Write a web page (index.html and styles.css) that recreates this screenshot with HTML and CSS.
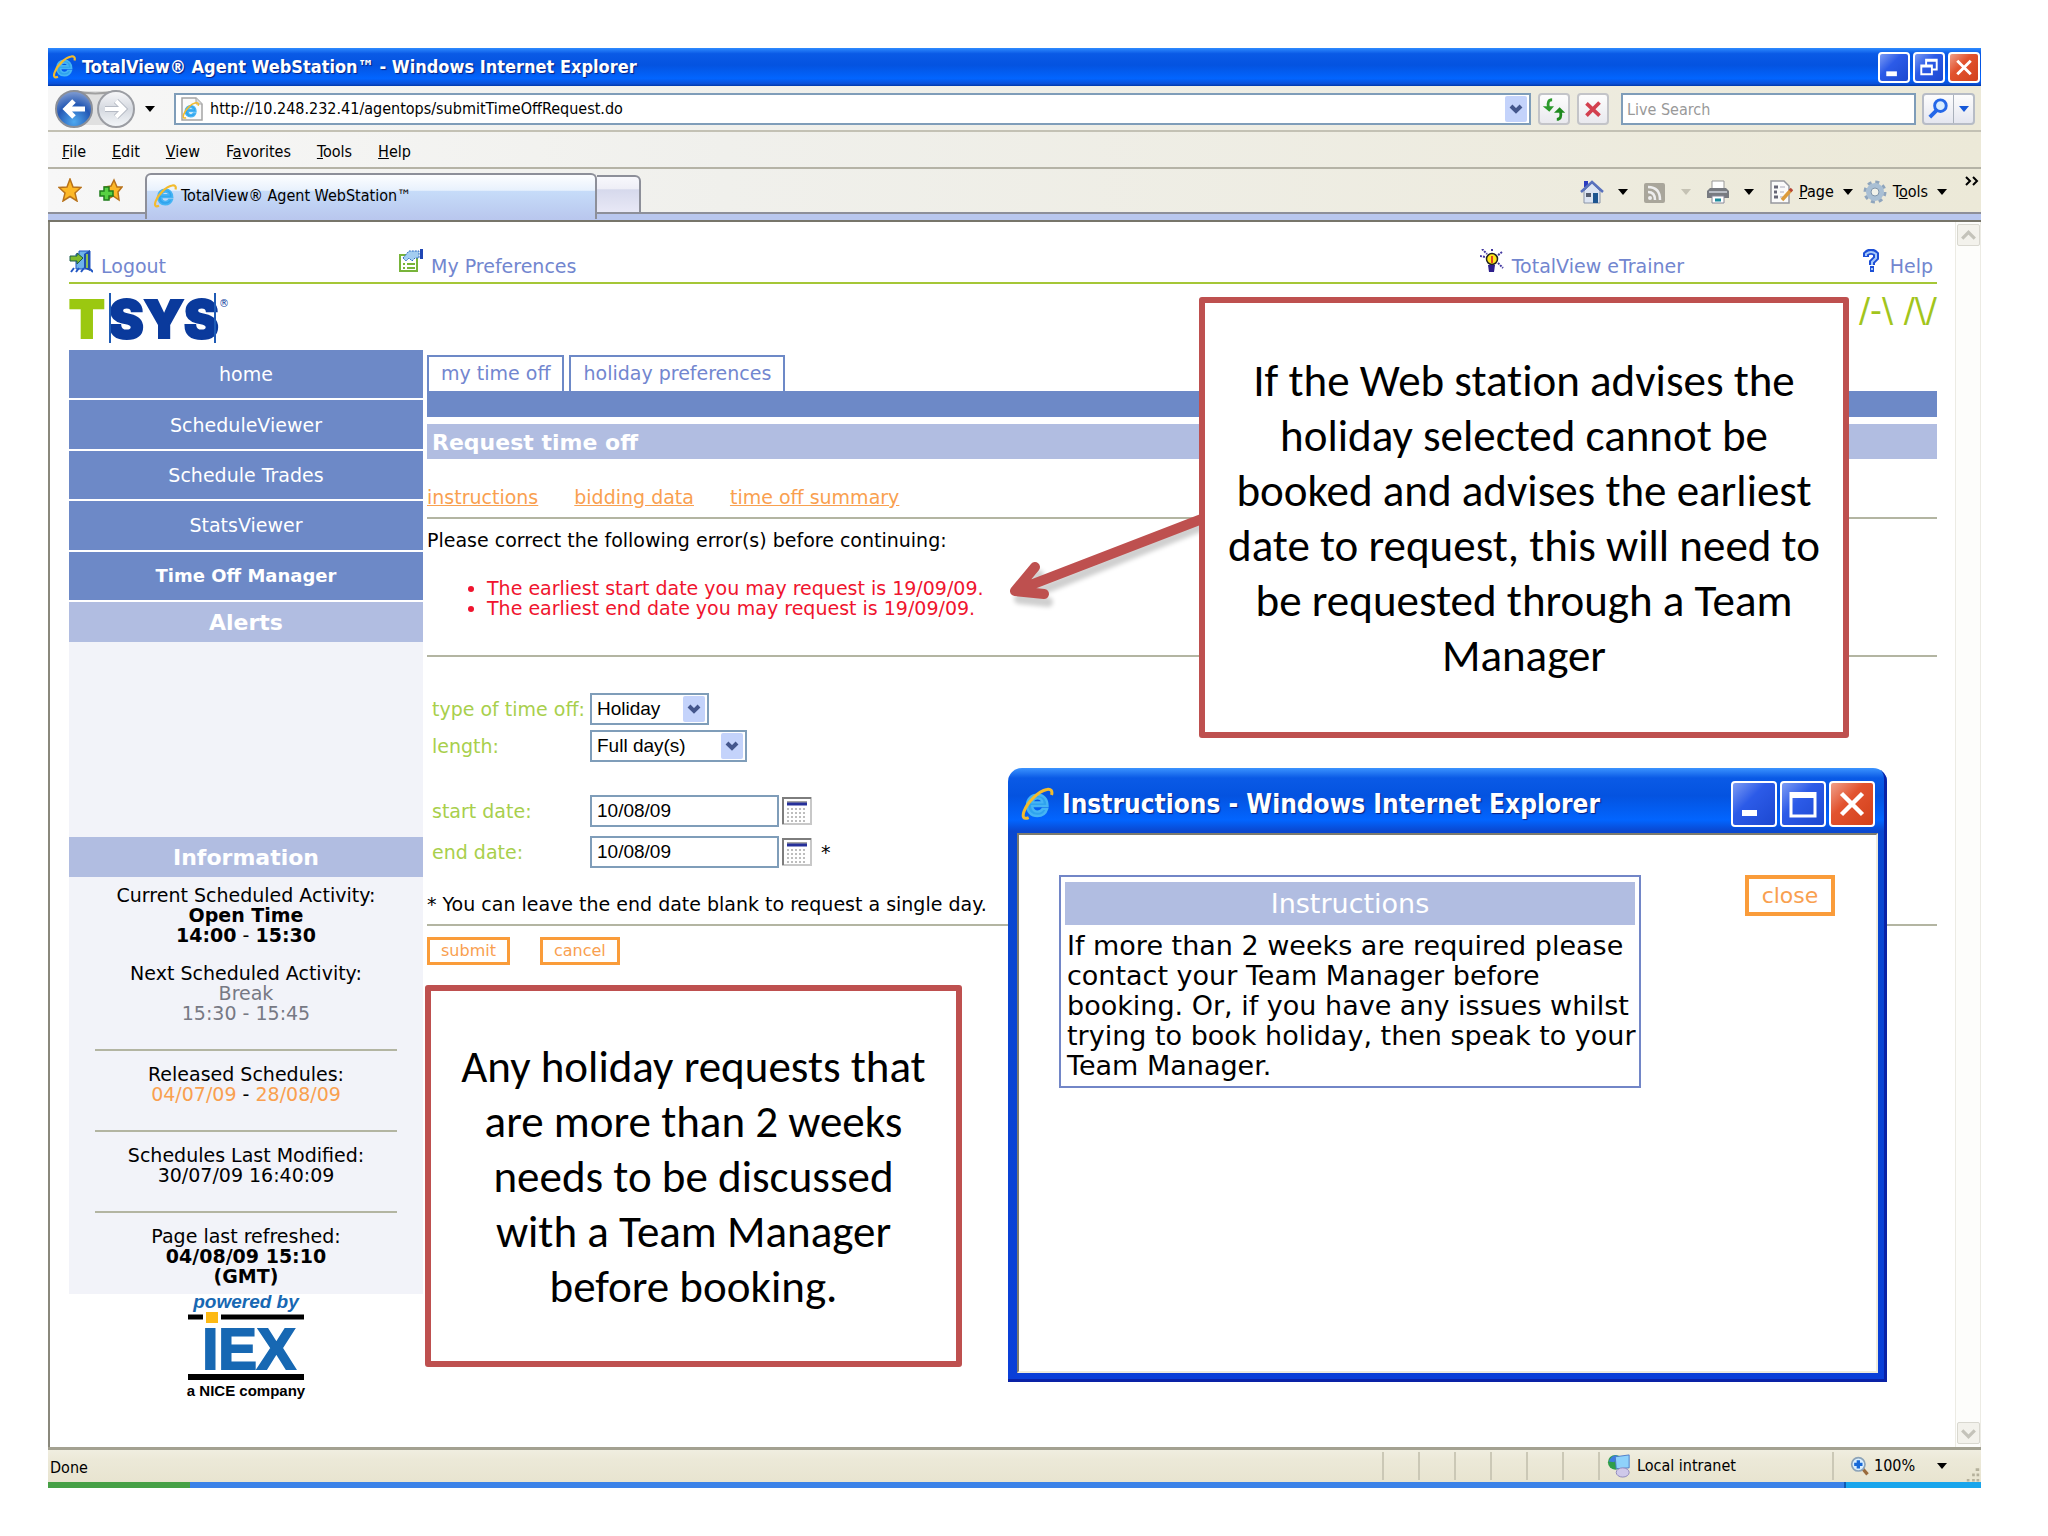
FILE: index.html
```html
<!DOCTYPE html>
<html lang="en">
<head>
  <meta charset="UTF-8">
  <meta name="viewport" content="width=device-width, initial-scale=1">
  <title>TotalView Agent WebStation</title>
  <link rel="stylesheet" href="styles.css">
</head>
<body>
  <!-- Shared icons -->
  <svg class="defs" aria-hidden="true">
    <defs>
      <symbol id="ie" viewBox="0 0 24 26">
        <path d="M19.5 14.5H8.500c.3 2.600 2 4 4 4 1.700 0 2.800-.7 3.500-2h3.300c-1 3.300-3.500 5.200-7 5.200-4.500 0-7.500-3-7.500-7.700S8 6.300 12.400 6.300c4.400 0 7.200 3 7.200 8.200zM8.700 11.800h7.200c-.3-1.800-1.600-2.900-3.500-2.900s-3.300 1.100-3.700 2.900z" fill="#2fa3ee" stroke="#45b4f4" stroke-width="1.700"/>
        <path d="M22.500 6.500c.9-3-.6-4.700-3.400-4C13 3.800 5 11.500 2.600 18.500c-1.300 3.700-.4 5.900 3.400 4.300" fill="none" stroke="#f2bb2e" stroke-width="2.200"/>
      </symbol>
      <symbol id="calendar" viewBox="0 0 30 28">
        <rect x="1" y="1" width="28" height="26" fill="#fff" stroke="#c8c8c8" stroke-width="2"/>
        <path d="M1 27V1h28" fill="none" stroke="#7d7d7d" stroke-width="2"/>
        <path d="M5 5h20" stroke="#a5a5a5" stroke-width="2"/>
        <path d="M5 7h20" stroke="#26309a" stroke-width="3"/>
        <path d="M5 12h20M5 16h20M5 20h20M5 24h20" stroke="#bdbdbd" stroke-width="2" stroke-dasharray="2 2"/>
      </symbol>
      <symbol id="drop" viewBox="0 0 10 6"><path d="M0 0h10L5 6z" fill="currentColor"/></symbol>
    </defs>
  </svg>

  <div class="window">
    <header class="titlebar">
      <svg class="icon-ie"><use href="#ie"/></svg>
      <span class="titlebar-text">TotalView® Agent WebStation™ - Windows Internet Explorer</span>
      <div class="controls">
        <button class="control" aria-label="Minimize"><svg viewBox="0 0 28 28"><rect x="6" y="18" width="11" height="5" fill="#fff"/></svg></button>
        <button class="control" aria-label="Restore"><svg viewBox="0 0 28 28"><path d="M11 11V6h11v10h-4M11 7h11M6 12h11v9H6zM6 13h11" fill="none" stroke="#fff" stroke-width="2"/></svg></button>
        <button class="control control-close" aria-label="Close"><svg viewBox="0 0 28 28"><path d="M7 7l14 14M21 7L7 21" stroke="#fff" stroke-width="3"/></svg></button>
      </div>
    </header>

    <div class="addressbar">
      <svg class="travel" viewBox="0 0 82 40">
        <defs>
          <radialGradient id="back" cx=".5" cy=".85" r=".8"><stop offset="0" stop-color="#4fa9f0"/><stop offset=".6" stop-color="#2458b4"/><stop offset="1" stop-color="#7896cf"/></radialGradient>
          <linearGradient id="fwd" x2="0" y2="1"><stop offset="0" stop-color="#f8f8fa"/><stop offset=".5" stop-color="#d5d9e0"/><stop offset="1" stop-color="#f4f7fa"/></linearGradient>
        </defs>
        <path d="M20 2h43v34H20z" fill="#e0e0e0"/>
        <path d="M20 2q21 5 43 0" fill="none" stroke="#a0a0a0" stroke-width="2"/>
        <circle cx="20" cy="20" r="18" fill="url(#back)" stroke="#8b8f98" stroke-width="2"/>
        <circle cx="62" cy="20" r="18" fill="url(#fwd)" stroke="#9b9da3" stroke-width="2"/>
        <path d="M31 20H12M20 12l-8 8 8 8" fill="none" stroke="#fff" stroke-width="5"/>
        <path d="M51 20h19M62 12l8 8-8 8" fill="none" stroke="#b5bac4" stroke-width="6"/>
        <path d="M51 20h19M62 12l8 8-8 8" fill="none" stroke="#fff" stroke-width="4"/>
      </svg>
      <svg class="drop"><use href="#drop"/></svg>
      <div class="address">
        <svg class="page-icon" viewBox="0 0 24 26">
          <path d="M2 2h14l6 6v16H2z" fill="#fafafa" stroke="#a5a5a5" stroke-width="1.500"/>
          <path d="M16 2v6h6" fill="#ddd" stroke="#a5a5a5"/>
          <use href="#ie" x="1" y="5" width="19" height="19"/>
        </svg>
        <input type="text" aria-label="Address" value="http://10.248.232.41/agentops/submitTimeOffRequest.do">
        <button class="address-drop" aria-label="Show addresses"><svg viewBox="0 0 22 26"><path d="M6 10l5 5 5-5" fill="none" stroke="#44568c" stroke-width="4"/></svg></button>
      </div>
      <button class="tool" aria-label="Refresh"><svg viewBox="0 0 30 28"><path d="M13 4c-4 0-5 3-4 8" fill="none" stroke="#2c9a2c" stroke-width="3"/><path d="M3 11h12l-5 6z" fill="#2c9a2c"/><path d="M18 25c4 0 5-3 4-8" fill="none" stroke="#1f8a1f" stroke-width="3"/><path d="M15 18h12l-6-6z" fill="#1f8a1f"/></svg></button>
      <button class="tool" aria-label="Stop"><svg viewBox="0 0 30 28"><path d="M8 8l14 13M22 7L8 21" stroke="#d3404f" stroke-width="4"/></svg></button>
      <input class="search" type="text" aria-label="Search" placeholder="Live Search">
      <div class="search-tools">
        <button aria-label="Search"><svg viewBox="0 0 30 28"><circle cx="17" cy="11" r="6" fill="#d7ecff" stroke="#2467e8" stroke-width="3"/><path d="M13 16l-7 7" stroke="#2467e8" stroke-width="4"/></svg></button>
        <button class="search-drop" aria-label="Search options"><svg class="drop"><use href="#drop"/></svg></button>
      </div>
    </div>

    <nav class="menubar">
      <a href="#"><u>F</u>ile</a>
      <a href="#"><u>E</u>dit</a>
      <a href="#"><u>V</u>iew</a>
      <a href="#">F<u>a</u>vorites</a>
      <a href="#"><u>T</u>ools</a>
      <a href="#"><u>H</u>elp</a>
    </nav>

    <div class="tabbar">
      <div class="favs">
        <svg class="icon" viewBox="0 0 24 24"><path d="M12 1l3 8 8 .5-6 5.500 2 8-7-4.500L5 23l2-8-6-5.500L9 9z" fill="#fdb827" stroke="#b8721a" stroke-width="1.500"/></svg>
        <svg class="icon" viewBox="0 0 24 24"><path d="M15 2l3 7h5l-4 5 1 8-6-4-5 3 1-8-4-4 6-1z" fill="#fdb827" stroke="#b8721a" stroke-width="1.500"/><path d="M5 9h5v4h4v5h-4v4H5v-4H1v-5h4z" fill="#57d142" stroke="#1f7d1c" stroke-width="1.500"/></svg>
      </div>
      <div class="tab">
        <svg class="icon-ie"><use href="#ie"/></svg>
        <span>TotalView® Agent WebStation™</span>
      </div>
      <button class="new-tab" aria-label="New tab"></button>
      <div class="commands">
        <svg class="icon" viewBox="0 0 24 24"><path d="M4 1h4v6H4z" fill="#2a3cc0"/><path d="M4 11l8-8 8 8v12H4z" fill="#dde5f2" stroke="#8b95a8"/><path d="M1 12L12 2l11 10" fill="none" stroke="#5871bd" stroke-width="2.500"/><path d="M13 13h5v10h-5z" fill="#1d5590"/><path d="M6 13h5v4H6z" fill="#555e70"/></svg>
        <svg class="drop"><use href="#drop"/></svg>
        <svg class="icon" viewBox="0 0 24 24"><rect x="1" y="3" width="21" height="20" rx="2" fill="#a9a69b"/><circle cx="7" cy="18" r="2" fill="#eee"/><path d="M5 12q7 0 7 8M5 7q12 0 12 13" fill="none" stroke="#eee" stroke-width="2.500"/></svg>
        <svg class="drop muted"><use href="#drop"/></svg>
        <svg class="icon" viewBox="0 0 24 24"><path d="M6 1h12v9H6z" fill="#fff" stroke="#999"/><path d="M1 11l3-3h16l3 3v7H1z" fill="#777a80"/><path d="M3 12h18" stroke="#b8bcc4" stroke-width="2"/><path d="M6 16h12v7H6z" fill="#fff" stroke="#889"/><path d="M9 20h6" stroke="#1e8b9c" stroke-width="3"/></svg>
        <svg class="drop"><use href="#drop"/></svg>
        <a class="command" href="#">
          <svg class="icon" viewBox="0 0 24 24"><path d="M2 1h13l5 5v17H2z" fill="#fafafa" stroke="#96989e" stroke-width="1.500"/><path d="M5 7h4M5 12h3M5 17h4" stroke="#667" stroke-width="3"/><path d="M11 7h5M11 12h4M11 17h3" stroke="#aab"/><path d="M13 20l9-10" stroke="#dc9b3c" stroke-width="3.500"/><path d="M21 11l2-2" stroke="#b84836" stroke-width="3.500"/></svg>
          <span><u>P</u>age</span>
          <svg class="drop"><use href="#drop"/></svg>
        </a>
        <a class="command" href="#">
          <svg class="icon" viewBox="0 0 24 24"><circle cx="12" cy="12" r="10" fill="none" stroke="#8fa5bd" stroke-width="3" stroke-dasharray="4 3.850"/><circle cx="12" cy="12" r="6.500" fill="none" stroke="#a9bfd4" stroke-width="5"/><circle cx="12" cy="12" r="4" fill="#f2f2ea" stroke="#7f95ac"/></svg>
          <span>T<u>o</u>ols</span>
          <svg class="drop"><use href="#drop"/></svg>
        </a>
      </div>
      <svg class="more" viewBox="0 0 14 10"><path d="M1 1l4 4-4 4M8 1l4 4-4 4" fill="none" stroke="#000" stroke-width="2"/></svg>
    </div>

    <div class="viewport">
      <main class="page">
        <nav class="toplinks">
          <a class="logout" href="#">
            <svg class="icon" viewBox="0 0 24 24"><path d="M7 5h3V2h11v18H7z" fill="#6db3ea" stroke="#2257c4"/><path d="M15 5l6-4v21l-6-3z" fill="#1f4fb0"/><path d="M18 5v14" stroke="#8cc152" stroke-width="2"/><path d="M1 7h7V4l6 5-6 6v-3H1z" fill="#7fba2c" stroke="#1d5d4c"/><path d="M2 23l3-4M7 23l3-4M12 23l3-4M21 20l3 3" stroke="#2257c4" stroke-width="2"/></svg>
            <span>Logout</span>
          </a>
          <a class="preferences" href="#">
            <svg class="icon" viewBox="0 0 24 24"><path d="M1 6h17v16H1z" fill="#fff" stroke="#78b43a" stroke-width="2"/><path d="M4 15h2M4 19h2M8 15h8M8 19h8" stroke="#78b43a" stroke-width="2"/><path d="M4 9l6-7h10v7h-4l-3 3-3-3-3 3z" fill="#a3cdf0" stroke="#2b69c0" stroke-dasharray="2 1"/><path d="M21 0h3v10h-3z" fill="#2046b4"/></svg>
            <span>My Preferences</span>
          </a>
          <a class="trainer" href="#">
            <svg class="icon" viewBox="0 0 24 24"><path d="M2 0l5 5M0 7l5 1M12 0v3M22 3l-5 4M18 14l5 5" stroke="#4338a0" stroke-width="2" stroke-dasharray="2 1"/><circle cx="12" cy="10" r="5.500" fill="#ffe81c" stroke="#222" stroke-width="1.500"/><path d="M12 7v7" stroke="#e04920" stroke-width="2"/><path d="M8 16h7l-1 7h-5z" fill="#2d1f8c"/></svg>
            <span>TotalView eTrainer</span>
          </a>
          <a class="help" href="#">
            <svg class="icon" viewBox="0 0 24 24"><path d="M8 8V5q5-5 10 0v4l-4 4v3M12 20h4" fill="none" stroke="#1c4fd6" stroke-width="6"/><path d="M8 7V5q5-4 10 0v4l-4 4v3M13 20h2" fill="none" stroke="#a8cbfa" stroke-width="2"/></svg>
            <span>Help</span>
          </a>
        </nav>

        <div class="brand">
          <svg class="tsys" viewBox="0 0 162 56" role="img" aria-label="TSYS">
            <text class="tsys-t" x="0" y="45">T</text>
            <text class="tsys-sys" x="40" y="45">SYS</text>
            <text class="tsys-r" x="150" y="14">®</text>
            <path d="M41 0v50M146 0v50" stroke="#1f5bb5" stroke-width="2"/>
          </svg>
          <span class="mark">/-\ /\/</span>
        </div>

        <div class="columns">
          <aside class="sidebar">
            <nav class="menu">
              <a href="#">home</a>
              <a href="#">ScheduleViewer</a>
              <a href="#">Schedule Trades</a>
              <a href="#">StatsViewer</a>
              <a class="current" href="#">Time Off Manager</a>
            </nav>
            <h2>Alerts</h2>
            <div class="alerts"></div>
            <h2>Information</h2>
            <div class="info">
              <p>Current Scheduled Activity:<br><b>Open Time</b><br><b>14:00</b> - <b>15:30</b></p>
              <p class="next">Next Scheduled Activity:<br><span class="grey">Break<br>15:30 - 15:45</span></p>
              <hr>
              <p>Released Schedules:<br><a href="#">04/07/09</a> - <a href="#">28/08/09</a></p>
              <hr>
              <p>Schedules Last Modified:<br>30/07/09 16:40:09</p>
              <hr>
              <p>Page last refreshed:<br><b>04/08/09 15:10<br>(GMT)</b></p>
            </div>
            <svg class="iex" viewBox="0 0 118 106" role="img" aria-label="powered by IEX, a NICE company">
              <text class="iex-powered" x="59" y="14">powered by</text>
              <path d="M1 23h15M34 23h83" stroke="#000" stroke-width="5"/>
              <rect x="19" y="18" width="12" height="11" fill="#fdb913"/>
              <text class="iex-name" x="62" y="75">IEX</text>
              <path d="M1 83h116" stroke="#000" stroke-width="6"/>
              <text class="iex-nice" x="59" y="102">a NICE company</text>
            </svg>
          </aside>

          <section class="content">
            <nav class="subtabs">
              <a href="#">my time off</a>
              <a href="#">holiday preferences</a>
            </nav>
            <div class="strip"></div>
            <h1>Request time off</h1>
            <nav class="links">
              <a href="#">instructions</a>
              <a href="#">bidding data</a>
              <a href="#">time off summary</a>
            </nav>
            <div class="errors">
              <p>Please correct the following error(s) before continuing:</p>
              <ul>
                <li>The earliest start date you may request is 19/09/09.</li>
                <li>The earliest end date you may request is 19/09/09.</li>
              </ul>
            </div>
            <form class="request">
              <div class="row">
                <label for="type">type of time off:</label>
                <select id="type" class="select-type"><option>Holiday</option></select>
              </div>
              <div class="row">
                <label for="length">length:</label>
                <select id="length" class="select-length"><option>Full day(s)</option></select>
              </div>
              <div class="row row-date">
                <label for="start">start date:</label>
                <input id="start" type="text" value="10/08/09">
                <button class="calendar" type="button" aria-label="Pick start date"><svg><use href="#calendar"/></svg></button>
              </div>
              <div class="row row-end">
                <label for="end">end date:</label>
                <input id="end" type="text" value="10/08/09">
                <button class="calendar" type="button" aria-label="Pick end date"><svg><use href="#calendar"/></svg></button>
                <span>*</span>
              </div>
              <p class="note">* You can leave the end date blank to request a single day.</p>
              <div class="actions">
                <button class="action" type="button">submit</button>
                <button class="action" type="button">cancel</button>
              </div>
            </form>
          </section>
        </div>
      </main>
      <div class="scrollbar">
        <button aria-label="Scroll up"><svg viewBox="0 0 20 20"><path d="M4 13l6-6 6 6" fill="none" stroke="#c4c3ba" stroke-width="3"/></svg></button>
        <button aria-label="Scroll down"><svg viewBox="0 0 20 20"><path d="M4 7l6 6 6-6" fill="none" stroke="#c4c3ba" stroke-width="3"/></svg></button>
      </div>
    </div>

    <footer class="statusbar">
      <span class="done">Done</span>
      <i class="cell"></i><i class="cell"></i><i class="cell"></i><i class="cell"></i><i class="cell"></i><i class="cell"></i>
      <span class="zone">
        <svg class="icon" viewBox="0 0 24 26"><circle cx="8" cy="9" r="8" fill="#2f9e4a"/><path d="M1 8q3-7 9-7l-3 8z" fill="#3f7be0"/><path d="M8 3l15-2v14l-14 1z" fill="#8fd2fb" stroke="#4a78c8"/><ellipse cx="16" cy="20" rx="7" ry="5" fill="#cfc9ea" stroke="#8d86bb"/></svg>
        <span>Local intranet</span>
      </span>
      <span class="zoom">
        <svg class="zoom-icon" viewBox="0 0 24 24"><path d="M15 15l6 7" stroke="#9a6b3c" stroke-width="4"/><circle cx="10" cy="10" r="8" fill="#d9efff" stroke="#8ca3b8" stroke-width="2"/><path d="M10 5v10M5 10h10" stroke="#1769d8" stroke-width="4"/></svg>
        <span>100%</span>
        <svg class="drop"><use href="#drop"/></svg>
      </span>
      <svg class="grip" viewBox="0 0 18 18"><path d="M12 4h4M8 10h3M13 10h3M2 16h3M8 16h3M13 16h3" stroke="#b5b19c" stroke-width="3"/></svg>
    </footer>
    <div class="taskbar"><i class="start"></i><i class="tray"></i></div>

    <!-- Notes and popup over the page -->
    <svg class="arrow" viewBox="0 0 210 100">
      <path class="arrow-shadow" d="M205 24L17 99M37 75L17 99l29 3"/>
      <path d="M205 17L13 91M33 67L13 91l29 3"/>
    </svg>
    <div class="callout callout-earliest">If the Web station advises the holiday selected cannot be booked and advises the earliest date to request, this will need to be requested through a Team Manager</div>
    <div class="callout callout-weeks">Any holiday requests that are more than 2 weeks needs to be discussed with a Team Manager before booking.</div>

    <section class="popup">
      <header class="popup-title">
        <svg class="icon-ie"><use href="#ie"/></svg>
        <span class="titlebar-text">Instructions - Windows Internet Explorer</span>
        <div class="controls">
          <button class="control" aria-label="Minimize"><svg viewBox="0 0 28 28"><rect x="6" y="18" width="10" height="4" fill="#fff"/></svg></button>
          <button class="control" aria-label="Maximize"><svg viewBox="0 0 28 28"><path d="M6 7h16v15H6zM6 9h16" fill="none" stroke="#fff" stroke-width="2"/></svg></button>
          <button class="control control-close" aria-label="Close window"><svg viewBox="0 0 28 28"><path d="M7 7l14 14M21 7L7 21" stroke="#fff" stroke-width="3"/></svg></button>
        </div>
      </header>
      <div class="popup-body">
        <div class="instructions">
          <h3>Instructions</h3>
          <p>If more than 2 weeks are required please contact your Team Manager before booking. Or, if you have any issues whilst trying to book holiday, then speak to your Team Manager.</p>
        </div>
        <button class="close" type="button">close</button>
      </div>
    </section>
  </div>
</body>
</html>
```

FILE: styles.css
```css
* {
  box-sizing: border-box;
}

body {
  background-color: #fff;
  color: #000;
  font-family: "DejaVu Sans", Verdana, sans-serif;
  font-size: 19px;
  line-height: 20px;
  margin: 0;
  min-height: 100vh;
  padding: 48px 67px 48px 48px;
  display: flex;
}

h1, h2, h3, p, ul {
  margin: 0;
  padding: 0;
}

a {
  color: inherit;
  text-decoration: none;
}

button, input, select {
  font: inherit;
  color: inherit;
  margin: 0;
  padding: 0;
}

button {
  cursor: pointer;
}

svg {
  display: block;
  flex: none;
}

.defs {
  position: absolute;
  width: 0;
  height: 0;
}

.icon {
  width: 24px;
  height: 24px;
}

.icon-ie {
  width: 24px;
  height: 26px;
}

.drop {
  width: 10px;
  height: 6px;
}

.muted {
  color: #c5c2b4;
}

/* Browser window */
.window {
  position: relative;
  flex: 1;
  display: flex;
  flex-direction: column;
  min-width: 0;
}

.titlebar {
  display: flex;
  align-items: center;
  height: 38px;
  padding: 0 1px 0 4px;
  gap: 6px;
  background: linear-gradient(#2f8bff, #0a5ae6 15%, #0453e0 45%, #0265ff 80%, #0a50d8 94%, #0038a8);
}

.titlebar-text {
  color: #fff;
  font-family: "DejaVu Sans Condensed", "Open Sans", sans-serif;
  font-size: 18px;
  font-weight: bold;
  text-shadow: 1px 1px 1px #0a1e80;
  white-space: nowrap;
}

.controls {
  display: flex;
  gap: 3px;
  margin-left: auto;
}

.control {
  width: 32px;
  height: 31px;
  border: 2px solid #fff;
  border-radius: 4px;
  background: linear-gradient(135deg, #7c9cf4, #2c5be8 40%, #1c48d0);
}

.control-close {
  background: linear-gradient(135deg, #f0a08a, #e2532f 40%, #d2401a);
}

.control svg {
  width: 100%;
  height: 100%;
}

.addressbar,
.menubar,
.tabbar,
.statusbar {
  display: flex;
  font-family: "DejaVu Sans Condensed", "Open Sans", sans-serif;
  font-size: 16px;
}

.addressbar {
  height: 46px;
  align-items: center;
  padding: 2px 6px 0;
  border-bottom: 2px solid #c3c1b4;
  background: linear-gradient(90deg, #f7f7f7, #f0f0ec 35%, #ece9d8);
}

.travel {
  width: 82px;
  height: 40px;
}

.addressbar > .drop {
  margin: 0 19px 0 9px;
}

.address {
  display: flex;
  flex: 1;
  align-items: center;
  height: 32px;
  padding: 2px;
  border: 2px solid #7f9db9;
  background-color: #fff;
}

.page-icon {
  width: 24px;
  height: 26px;
  margin: 0 6px 0 2px;
}

.address input {
  flex: 1;
  min-width: 0;
  border: none;
  outline: none;
}

.address-drop {
  width: 22px;
  height: 26px;
  border: none;
  border-radius: 2px;
  background-color: #c4d3fb;
}

.tool {
  width: 32px;
  height: 32px;
  margin-left: 7px;
  border: 2px solid #c3c4c8;
  border-radius: 4px;
  background: linear-gradient(#fdfdfd, #e9e9ee);
}

.search {
  width: 295px;
  height: 32px;
  margin: 0 6px 0 12px;
  padding: 0 4px;
  border: 2px solid #7f9db9;
}

.search::placeholder {
  color: #999;
}

.search-tools {
  display: flex;
  width: 53px;
  height: 32px;
  border: 2px solid #b7bcc6;
  border-radius: 4px;
  background: linear-gradient(#fdfdfd, #e4e6ef);
}

.search-tools button {
  flex: 1;
  border: none;
  background: none;
}

.search-tools .search-drop {
  display: flex;
  flex: none;
  align-items: center;
  justify-content: center;
  width: 20px;
  border-left: 1px solid #a9b0bb;
  color: #1558d8;
}

.menubar {
  height: 37px;
  align-items: center;
  gap: 26px;
  padding: 4px 14px 0;
  border-bottom: 2px solid #b5b3a6;
  background: linear-gradient(90deg, #f7f7f7, #f0f0ec 35%, #ece9d8);
}

.tabbar {
  height: 53px;
  align-items: flex-start;
  border-bottom: 2px solid #77756a;
  background: linear-gradient(#0000 43px, #8d8f99 43px, #8d8f99 45px, #b9c7ee 45px), linear-gradient(90deg, #f7f7f7, #f0f0ec 35%, #ece9d8);
}

.favs {
  display: flex;
  width: 97px;
  gap: 17px;
  padding: 9px 0 0 10px;
}

.tab {
  display: flex;
  align-items: center;
  width: 452px;
  height: 46px;
  margin-top: 4px;
  padding: 0 0 2px 6px;
  gap: 4px;
  border: 2px solid #8d8f99;
  border-bottom: none;
  border-radius: 6px 6px 0 0;
  background: linear-gradient(#fdfeff, #e8f1fd 35%, #c6dcf9 36%, #b9c7ee);
}

.new-tab {
  width: 44px;
  height: 39px;
  margin-top: 6px;
  border: 2px solid #8d8f99;
  border-left: none;
  border-radius: 0 6px 0 0;
  background: linear-gradient(#f8f8fc, #eeeef6 35%, #d6d9ec 36%, #e8e8f6);
}

.commands {
  display: flex;
  align-items: center;
  gap: 10px;
  margin: 11px 18px 0 auto;
}

.commands > .drop {
  margin: 0 5px 0 4px;
}

.command {
  display: flex;
  align-items: center;
  gap: 6px;
}

.command .drop {
  margin-left: 3px;
}

.more {
  width: 14px;
  height: 10px;
  margin: 7px 2px 0 0;
}

/* Web page */
.viewport {
  display: flex;
  flex: 1;
  border-left: 2px solid #8a887c;
  background-color: #fff;
}

.page {
  flex: 1;
  min-width: 0;
  padding: 27px 18px 0 19px;
}

.toplinks {
  display: flex;
  height: 35px;
  border-bottom: 2px solid #a5c736;
  color: #7286cf;
}

.toplinks a {
  display: flex;
  gap: 8px;
}

.toplinks span {
  padding-top: 7px;
}

.logout {
  width: 330px;
}

.trainer {
  margin-left: auto;
}

.help {
  width: 253px;
  padding-right: 4px;
  justify-content: flex-end;
}

.brand {
  display: flex;
  justify-content: space-between;
  height: 66px;
  padding-top: 9px;
}

.tsys {
  width: 162px;
  height: 56px;
  overflow: visible;
}

.tsys-t,
.tsys-sys {
  font-family: Inter, Lato, sans-serif;
  font-size: 52px;
  font-weight: 900;
  fill: #9bc810;
  stroke: #9bc810;
  stroke-width: 2px;
}

.tsys-sys {
  fill: #0a3a9c;
  stroke: #0a3a9c;
}

.tsys-r {
  font-size: 10px;
  fill: #0a3a9c;
}

.mark {
  padding-top: 8px;
  color: #a2c51c;
  font-size: 33px;
}

.columns {
  display: grid;
  grid-template-columns: 354px 1fr;
  gap: 4px;
}

.sidebar {
  text-align: center;
}

.menu {
  display: grid;
  grid-auto-rows: 1fr;
  gap: 2px;
  height: 252px;
  padding-bottom: 2px;
}

.menu a {
  display: flex;
  align-items: center;
  justify-content: center;
  background-color: #6d89c7;
  color: #fff;
}

.menu .current {
  font-size: 18px;
  font-weight: bold;
}

.sidebar h2 {
  height: 40px;
  background-color: #b1bde1;
  color: #fff;
  font-size: 22px;
  line-height: 42px;
}

.alerts {
  height: 195px;
  background-color: #f2f3f9;
}

.info {
  padding: 8px 26px;
  background-color: #f2f3f9;
}

.info .next {
  margin-top: 18px;
}

.info hr {
  height: 2px;
  margin: 26px 0 13px;
  border: none;
  background-color: #b3b5a2;
}

.info a {
  color: #f9a04f;
}

.grey {
  color: #777984;
}

.iex {
  width: 118px;
  height: 106px;
  margin: 0 auto;
  overflow: visible;
}

.iex text {
  font-family: "Liberation Sans", Arial, sans-serif;
  font-weight: bold;
  text-anchor: middle;
}

.iex .iex-powered {
  font-size: 19px;
  font-style: italic;
  fill: #1768b3;
}

.iex .iex-name {
  font-size: 58px;
  fill: #1768b3;
  stroke: #1768b3;
  stroke-width: 2px;
}

.iex .iex-nice {
  font-size: 15px;
}

.content {
  padding-top: 5px;
}

.subtabs {
  display: flex;
  gap: 5px;
  color: #7286cf;
}

.subtabs a {
  height: 36px;
  padding: 6px 12px 0;
  border: 2px solid #6d89c7;
  border-bottom: none;
}

.strip {
  height: 26px;
  margin-bottom: 7px;
  background-color: #6d89c7;
}

.content h1 {
  height: 35px;
  padding-left: 5px;
  background-color: #b1bde1;
  color: #fff;
  font-size: 22px;
  line-height: 37px;
}

.links {
  display: flex;
  gap: 36px;
  padding: 28px 0 10px;
  border-bottom: 2px solid #b3b5a2;
}

.links a {
  color: #f9a04f;
  text-decoration: underline;
}

.errors {
  padding: 11px 0 37px;
  border-bottom: 2px solid #b3b5a2;
}

.errors ul {
  margin-top: 28px;
  padding-left: 60px;
  color: #f0142e;
}

.request {
  padding-top: 36px;
}

.row {
  display: flex;
  align-items: center;
  height: 32px;
  margin-bottom: 5px;
}

.row label {
  width: 163px;
  padding-left: 5px;
  color: #a8cf4c;
  white-space: nowrap;
}

.row input,
.row select {
  height: 32px;
  padding-left: 5px;
  border: 2px solid #7f9db9;
  border-radius: 0;
  background-color: #fff;
  font-family: "Liberation Sans", Arial, sans-serif;
  font-size: 19px;
}

.row select {
  appearance: none;
  background-image: url("data:image/svg+xml,%3Csvg xmlns='http://www.w3.org/2000/svg' width='24' height='28'%3E%3Crect x='0' y='1' width='22' height='26' rx='2' fill='%23c4d3fb'/%3E%3Cpath d='M6 11l5 5 5-5' fill='none' stroke='%2344568c' stroke-width='4'/%3E%3C/svg%3E");
  background-repeat: no-repeat;
  background-position: right center;
}

.row .select-type {
  width: 119px;
}

.row .select-length {
  width: 157px;
}

.row input {
  width: 189px;
}

.row-date {
  margin: 33px 0 9px;
}

.row-end {
  margin-bottom: 26px;
}

.row span {
  margin-left: 9px;
}

.calendar {
  margin-left: 3px;
  border: none;
  background: none;
}

.calendar svg {
  width: 30px;
  height: 28px;
}

.note {
  padding-bottom: 10px;
  border-bottom: 2px solid #b3b5a2;
}

.actions {
  display: flex;
  gap: 30px;
  margin-top: 11px;
}

.action {
  height: 28px;
  padding: 0 11px;
  border: 3px solid #fa9c3a;
  background-color: #fff;
  color: #f9a04f;
  font-size: 16px;
}

.scrollbar {
  display: flex;
  flex-direction: column;
  justify-content: space-between;
  width: 26px;
  padding: 2px 1px 3px;
  border: 1px solid #ecebe4;
  border-width: 0 1px;
  background-color: #fdfdfb;
}

.scrollbar button {
  width: 23px;
  height: 22px;
  border: 1px solid #d9d8d0;
  border-radius: 2px;
  background-color: #f3f2ec;
}

.statusbar {
  height: 35px;
  border-top: 3px solid #a3a191;
  background: linear-gradient(#f0eee0, #ece9d8 30%, #e8e4d0);
  line-height: 36px;
}

.done {
  flex: 1;
  padding-left: 2px;
}

.cell,
.zone,
.zoom {
  margin: 2px 0;
  border-left: 2px solid #cbc8b6;
}

.cell {
  width: 36px;
}

.zone,
.zoom {
  display: flex;
  align-items: center;
}

.zone {
  width: 234px;
  gap: 6px;
  padding-left: 7px;
}

.zoom {
  width: 133px;
  gap: 4px;
  padding-left: 16px;
}

.zoom-icon {
  width: 20px;
  height: 20px;
}

.zoom .drop {
  margin-left: 18px;
}

.grip {
  width: 16px;
  height: 16px;
  align-self: flex-end;
}

.taskbar {
  display: flex;
  justify-content: space-between;
  height: 6px;
  background-color: #3b82e8;
}

.start {
  width: 142px;
  background-color: #46a046;
}

.tray {
  width: 137px;
  border-left: 2px solid #0f5bb5;
  background-color: #19a5ec;
}

/* Notes laid over the page */
.callout {
  position: absolute;
  display: flex;
  align-items: center;
  padding: 0 20px;
  border: 6px solid #be504f;
  border-radius: 3px;
  background-color: #fff;
  font-family: Carlito, Lato, sans-serif;
  font-size: 45px;
  font-variant-ligatures: none;
  line-height: 55px;
  text-align: center;
}

.callout-earliest {
  top: 249px;
  right: 132px;
  width: 650px;
  height: 441px;
}

.callout-weeks {
  top: 937px;
  left: 377px;
  width: 537px;
  height: 382px;
  padding: 0 24px;
}

.arrow {
  position: absolute;
  top: 452px;
  left: 954px;
  width: 210px;
  height: 100px;
  overflow: visible;
  fill: none;
  stroke: #be504f;
  stroke-width: 10px;
  stroke-linecap: round;
  stroke-linejoin: round;
}

.arrow-shadow {
  stroke: #00000030;
  filter: blur(2px);
}

/* Instructions popup */
.popup {
  position: absolute;
  top: 720px;
  right: 94px;
  display: flex;
  flex-direction: column;
  width: 879px;
  height: 614px;
  padding: 0 9px 9px;
  border-radius: 14px 14px 0 0;
  background: linear-gradient(#3b93ff, #0a5ae6 10px, #0453e0 28px, #0265ff 52px, #0a48d0 63px, #0a3fd8);
  box-shadow: inset -3px -3px #0a22a6;
}

.popup-title {
  display: flex;
  align-items: center;
  height: 65px;
  padding: 6px 3px 0;
  gap: 8px;
}

.popup-title .icon-ie {
  width: 34px;
  height: 36px;
}

.popup-title .titlebar-text {
  font-size: 26px;
}

.popup-title .control {
  width: 46px;
  height: 46px;
}

.popup-body {
  display: flex;
  flex: 1;
  align-items: flex-start;
  justify-content: space-between;
  padding: 40px 41px 0 40px;
  border: 2px solid #7d7b6e;
  border-color: #7d7b6e #efecdc #efecdc #7d7b6e;
  background-color: #fff;
}

.instructions {
  width: 582px;
  padding: 5px 0;
  border: 2px solid #7286c7;
}

.instructions h3 {
  height: 43px;
  margin: 0 4px 6px;
  background-color: #b1bde1;
  color: #fff;
  font-size: 27px;
  font-weight: normal;
  line-height: 44px;
  text-align: center;
}

.instructions p {
  padding-left: 6px;
  font-size: 27px;
  line-height: 30px;
}

.close {
  width: 90px;
  height: 41px;
  border: 4px solid #fa9c3a;
  background-color: #fff;
  color: #f9a04f;
  font-size: 22px;
}
```
